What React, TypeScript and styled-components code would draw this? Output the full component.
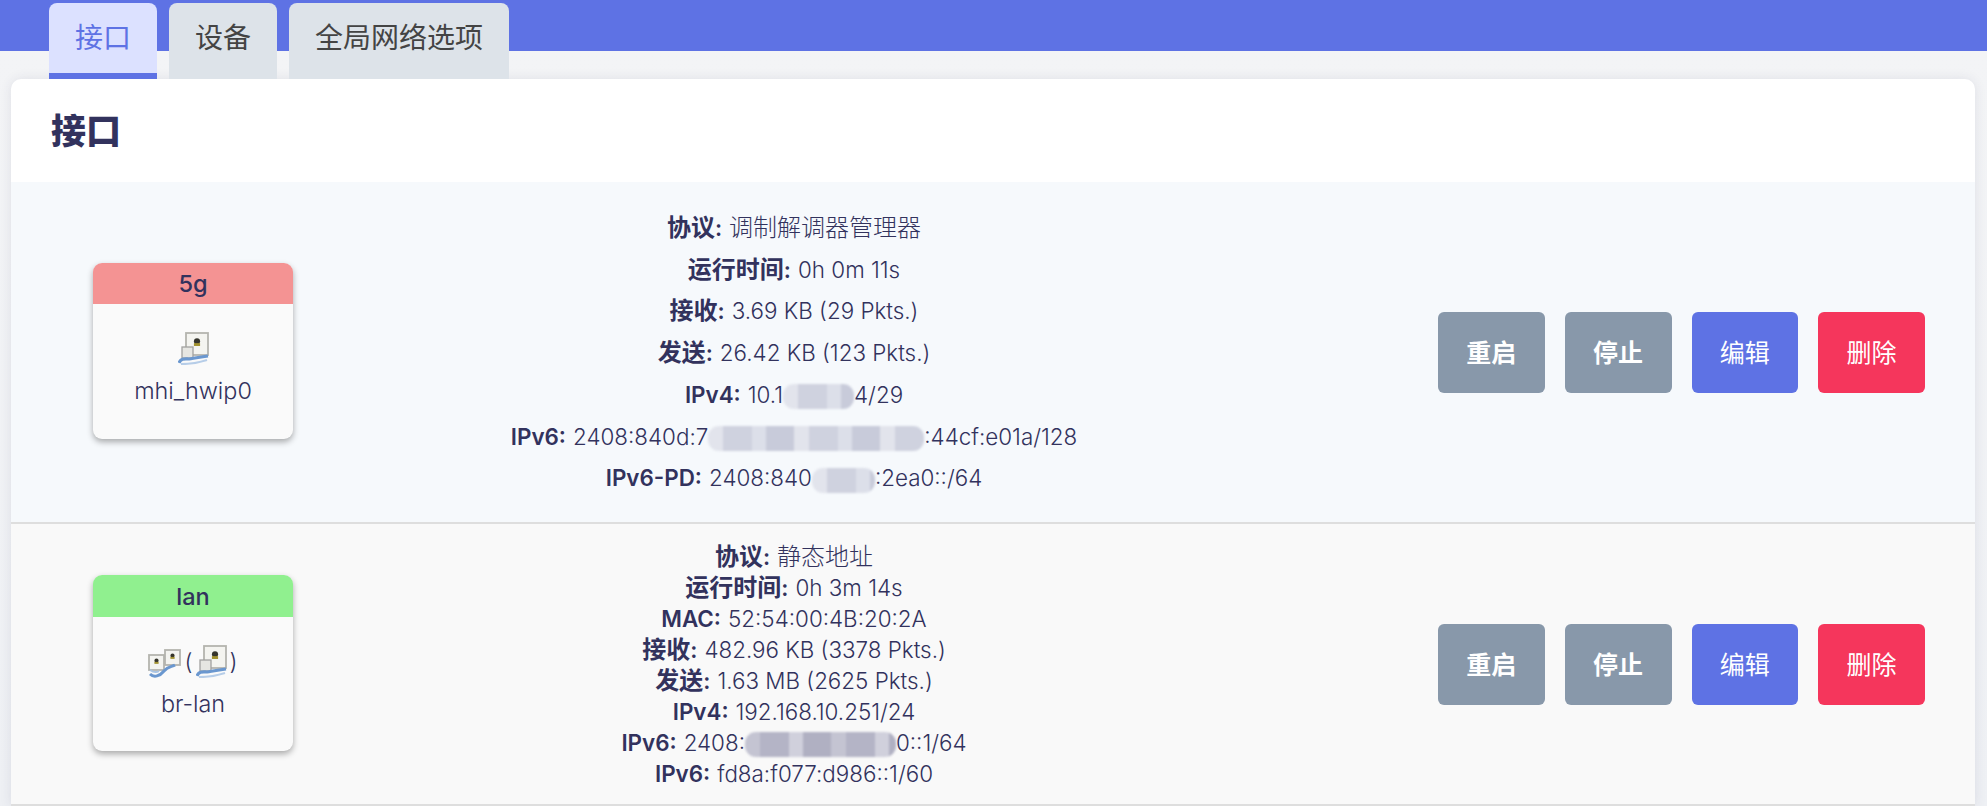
import React from "react";
import styled, { createGlobalStyle } from "styled-components";

const Global = createGlobalStyle`
  html, body { margin: 0; padding: 0; overflow: hidden; height: 806px; }
  body { font-family: "Inter", "Noto Sans CJK SC", sans-serif; color: #32325d; }
  #root { height: 806px; }
`;

const Page = styled.div`
  height: 806px;
  overflow: hidden;
  background: linear-gradient(180deg, #5e72e4 0, #5e72e4 51px, #f3f4f6 51px, #eef0f4 100%);
  box-sizing: border-box;
  padding: 3px 12px 0 11px;
`;

const TabList = styled.div`
  display: flex;
  gap: 12px;
  padding-left: 38px;
  height: 76px;
`;

const Tab = styled.div<{ $active?: boolean }>`
  box-sizing: border-box;
  padding: 0 26px 4px;
  display: flex;
  align-items: center;
  justify-content: center;
  border-radius: 8px 8px 0 0;
  font-size: 28px;
  font-weight: 400;
  font-family: "Noto Sans CJK SC", sans-serif;
  background: ${(p) => (p.$active ? "#dce1ff" : "#dde3e9")};
  color: ${(p) => (p.$active ? "#5e72e4" : "#444444")};
  border-bottom: 6px solid ${(p) => (p.$active ? "#5e72e4" : "#dde3e9")};
`;

const Card = styled.div`
  background: #ffffff;
  border-radius: 10px 10px 0 0;
  box-shadow: 0 0 12px rgba(50, 50, 93, 0.1);
`;

const Title = styled.h3`
  margin: 0;
  height: 103px;
  box-sizing: border-box;
  padding: 0 0 5px 40px;
  display: flex;
  align-items: center;
  font-size: 35px;
  font-weight: 900;
  font-family: "Noto Sans CJK SC", sans-serif;
  color: #32325d;
`;

const Row = styled.div<{ $alt?: boolean }>`
  display: grid;
  grid-template-columns: 364px 838px 1fr;
  align-items: center;
  height: ${(p) => (p.$alt ? 282 : 342)}px;
  box-sizing: border-box;
  background: ${(p) => (p.$alt ? "#f9f9f9" : "#f6f9fc")};
  border-bottom: 2px solid #dedede;
`;

const IfaceCell = styled.div`
  display: flex;
  justify-content: center;
`;

const IfaceBox = styled.div`
  width: 200px;
  height: 176px;
  margin-top: -2px;
  border-radius: 9px;
  background: #fafafa;
  box-shadow: 0 3px 6px rgba(0, 0, 0, 0.32);
  overflow: hidden;
  display: flex;
  flex-direction: column;
  align-items: center;
`;

const IfaceHead = styled.div<{ $color: string; $h: number }>`
  align-self: stretch;
  height: ${(p) => p.$h}px;
  background: ${(p) => p.$color};
  display: flex;
  align-items: center;
  justify-content: center;
  font-size: 23.5px;
  font-weight: 500;
  color: #32325d;
`;

const IfaceIcons = styled.div<{ $top: number }>`
  display: flex;
  align-items: flex-end;
  justify-content: center;
  gap: 3px;
  margin-top: ${(p) => p.$top}px;
  font-size: 23px;
  font-weight: 300;
  line-height: 32px;
`;

const IfaceName = styled.div`
  margin-top: 11px;
  font-size: 23.4px;
  font-weight: 300;
  line-height: 30px;
  color: #32325d;
`;

const Info = styled.div<{ $pitch: number }>`
  text-align: center;
  font-size: 22.4px;
  font-weight: 300;
  padding-top: 2px;
  line-height: ${(p) => p.$pitch}px;
  color: #32325d;
`;

const Line = styled.div``;

const Label = styled.strong`
  font-weight: 600;
  margin-right: 7px;
`;

const Zh = styled.span`
  font-family: "Noto Sans CJK SC", sans-serif;
  font-size: 24px;
  font-weight: 300;
  line-height: 1;
`;

const ZhLabel = styled(Zh)`
  font-weight: 700;
`;

const Mosaic = styled.span<{ $w: number; $dark?: boolean }>`
  display: inline-block;
  vertical-align: middle;
  width: ${(p) => p.$w}px;
  height: 25px;
  line-height: 1;
  border-radius: 11px;
  filter: blur(0.8px);
  background: repeating-linear-gradient(
    90deg,
    ${(p) => (p.$dark ? "#c4c4d2" : "#e2e4ec")} 0 15px,
    ${(p) => (p.$dark ? "#b4b4c6" : "#cfd2df")} 15px 44px,
    ${(p) => (p.$dark ? "#d0d0dc" : "#dcdfe9")} 44px 58px,
    ${(p) => (p.$dark ? "#b0b0c2" : "#c8cbda")} 58px 86px
  );
`;

const Actions = styled.div`
  display: flex;
  gap: 20px;
  justify-content: flex-end;
  padding-right: 50px;
`;

const Btn = styled.button<{ $bg: string; $bold?: boolean }>`
  width: 106.75px;
  height: 81px;
  border: none;
  border-radius: 6px;
  background: ${(p) => p.$bg};
  color: #ffffff;
  font-family: "Noto Sans CJK SC", sans-serif;
  font-size: 25px;
  font-weight: ${(p) => (p.$bold ? 700 : 400)};
  padding: 0 0 2px;
`;

const IconSvg = styled.svg`
  filter: blur(0.45px);
`;

const Port = ({ x, y, s }: { x: number; y: number; s: number }) => (
  <g>
    <rect x={x} y={y} width={s} height={s} fill="#f4f4f0" stroke="#b4b4ae" strokeWidth="1.8" />
    <circle cx={x + s * 0.5} cy={y + s * 0.38} r={s * 0.14} fill="#35342c" />
    <rect x={x + s * 0.36} y={y + s * 0.46} width={s * 0.28} height={s * 0.13} fill="#a2922f" />
  </g>
);

const SingleIcon = () => (
  <IconSvg width="31" height="33" viewBox="0 0 31 33">
    <Port x={8} y={1} s={22} />
    <rect x="4" y="15" width="11" height="11" fill="#e6e6e2" stroke="#a2a2a0" strokeWidth="1.3" />
    <path d="M1 31 C3 26 7 27 11 27 C17 26 22 25 30 24" stroke="#6a97cf" strokeWidth="3.2" fill="none" />
    <path d="M3 32 C12 32 20 31 29 28" stroke="#b6cde8" strokeWidth="2.2" fill="none" />
  </IconSvg>
);

const DoubleIcon = () => (
  <IconSvg width="33" height="29" viewBox="0 0 33 29">
    <Port x={1} y={6} s={15} />
    <Port x={17} y={1} s={15} />
    <path d="M2 25 C6 29 12 27 16 22 C20 17 24 18 27 16" stroke="#6a97cf" strokeWidth="3" fill="none" />
    <path d="M2 21 C5 23 8 24 11 22" stroke="#a9c4e4" strokeWidth="2" fill="none" />
  </IconSvg>
);

const Buttons = () => (
  <Actions>
    <Btn $bg="#8898aa" $bold>重启</Btn>
    <Btn $bg="#8898aa" $bold>停止</Btn>
    <Btn $bg="#5e72e4">编辑</Btn>
    <Btn $bg="#f5365c">删除</Btn>
  </Actions>
);

export default function App() {
  return (
    <Page>
      <Global />
      <TabList>
        <Tab $active>接口</Tab>
        <Tab>设备</Tab>
        <Tab>全局网络选项</Tab>
      </TabList>
      <Card>
        <Title>接口</Title>
        <Row>
          <IfaceCell>
            <IfaceBox>
              <IfaceHead $color="#f49393" $h={41}>5g</IfaceHead>
              <IfaceIcons $top={28}>
                <SingleIcon />
              </IfaceIcons>
              <IfaceName>mhi_hwip0</IfaceName>
            </IfaceBox>
          </IfaceCell>
          <Info $pitch={41.67}>
            <Line><Label><ZhLabel>协议</ZhLabel>:</Label><Zh>调制解调器管理器</Zh></Line>
            <Line><Label><ZhLabel>运行时间</ZhLabel>:</Label>0h 0m 11s</Line>
            <Line><Label><ZhLabel>接收</ZhLabel>:</Label>3.69 KB (29 Pkts.)</Line>
            <Line><Label><ZhLabel>发送</ZhLabel>:</Label>26.42 KB (123 Pkts.)</Line>
            <Line><Label>IPv4:</Label>10.1<Mosaic $w={71} />4/29</Line>
            <Line><Label>IPv6:</Label>2408:840d:7<Mosaic $w={216} />:44cf:e01a/128</Line>
            <Line><Label>IPv6-PD:</Label>2408:840<Mosaic $w={63} />:2ea0::/64</Line>
          </Info>
          <Buttons />
        </Row>
        <Row $alt>
          <IfaceCell>
            <IfaceBox>
              <IfaceHead $color="#90f08f" $h={42}>lan</IfaceHead>
              <IfaceIcons $top={28}>
                <DoubleIcon />
                <span>(</span>
                <SingleIcon />
                <span>)</span>
              </IfaceIcons>
              <IfaceName>br-lan</IfaceName>
            </IfaceBox>
          </IfaceCell>
          <Info $pitch={31}>
            <Line><Label><ZhLabel>协议</ZhLabel>:</Label><Zh>静态地址</Zh></Line>
            <Line><Label><ZhLabel>运行时间</ZhLabel>:</Label>0h 3m 14s</Line>
            <Line><Label>MAC:</Label>52:54:00:4B:20:2A</Line>
            <Line><Label><ZhLabel>接收</ZhLabel>:</Label>482.96 KB (3378 Pkts.)</Line>
            <Line><Label><ZhLabel>发送</ZhLabel>:</Label>1.63 MB (2625 Pkts.)</Line>
            <Line><Label>IPv4:</Label>192.168.10.251/24</Line>
            <Line><Label>IPv6:</Label>2408:<Mosaic $w={151} $dark />0::1/64</Line>
            <Line><Label>IPv6:</Label>fd8a:f077:d986::1/60</Line>
          </Info>
          <Buttons />
        </Row>
      </Card>
    </Page>
  );
}
